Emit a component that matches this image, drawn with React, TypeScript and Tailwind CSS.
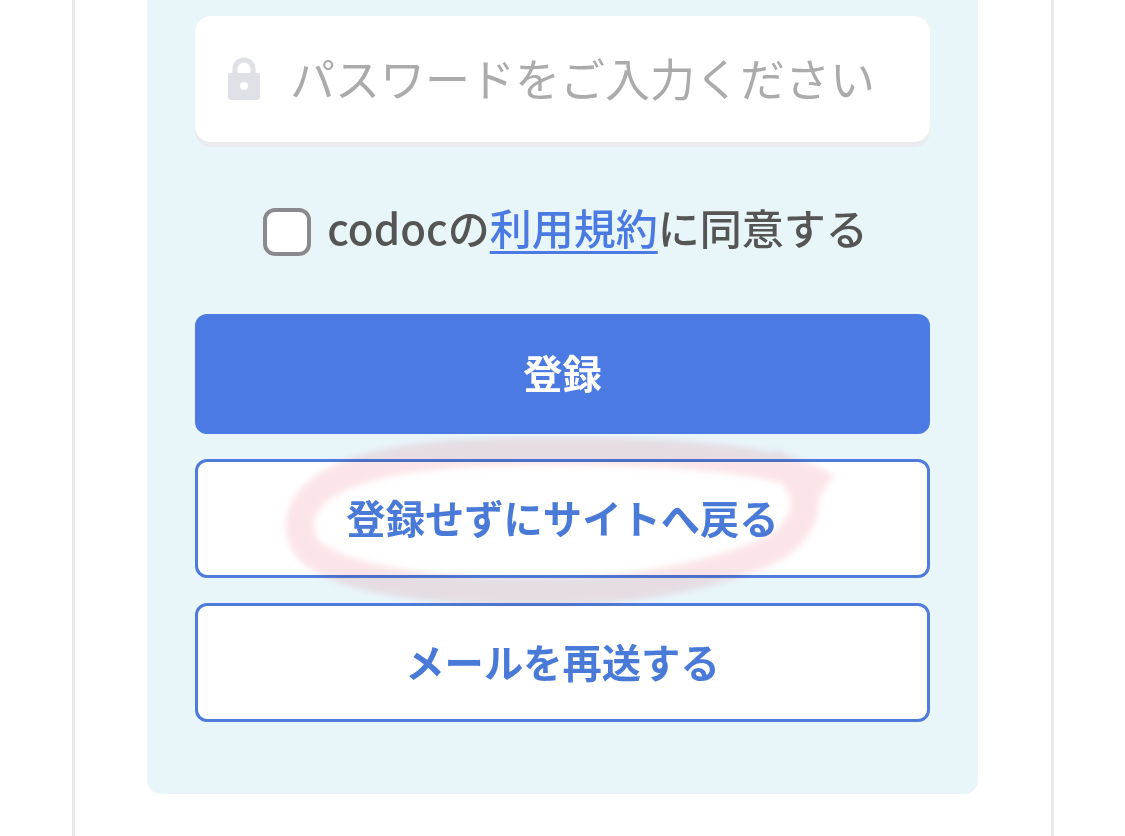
const font = "font-['Noto_Sans_CJK_JP','Noto_Sans',sans-serif]";

const LockIcon = () => (
  <svg width="34" height="44" viewBox="0 0 34 44" className="shrink-0">
    <path d="M8 18v-6a9 9 0 0 1 18 0v6" fill="none" stroke="#dfe1e6" strokeWidth="5" />
    <rect x="1" y="16" width="32" height="27" rx="3" fill="#dfe1e6" />
    <circle cx="17" cy="29" r="4" fill="#fff" />
  </svg>
);

// red marker scribble that was drawn over the screenshot
const Scribble = () => (
  <svg width="1125" height="836" viewBox="0 0 1125 836" className="absolute inset-0 pointer-events-none mix-blend-multiply">
    <defs>
      <filter id="soft" x="-10%" y="-10%" width="120%" height="120%">
        <feGaussianBlur stdDeviation="3" />
      </filter>
    </defs>
    <path
      d="M826 487C790 462 700 452 570 451C470 450 380 456 335 480C300 498 294 525 305 545C322 572 400 590 520 592C620 594 700 578 760 555C800 538 812 510 800 485C795 475 785 468 770 462"
      fill="none"
      stroke="#f08a94"
      strokeOpacity="0.22"
      strokeWidth="28"
      strokeLinecap="butt"
      strokeLinejoin="round"
      filter="url(#soft)"
    />
  </svg>
);

export default function App() {
  return (
    <div className={`relative w-[1125px] h-[836px] overflow-hidden bg-white ${font}`}>
      <div className="ml-[72px] w-[982px] h-[836px] border-x-[3px] border-[#e9e9eb] pl-[72px]">
        <div className="w-[831px] h-[794px] bg-[#e8f6fa] rounded-b-[14px] px-[48px] pt-[16px] flex flex-col">
          <div className="h-[126px] bg-white rounded-[16px] shadow-[0_5px_0_#e9ebee] flex items-center pl-[32px] gap-[29px]">
            <LockIcon />
            <span className="text-[45px] text-[#ababab] whitespace-nowrap leading-none pb-[4px]">パスワードをご入力ください</span>
          </div>

          <div className="mt-[66px] h-[48px] pl-[6px] flex items-center justify-center gap-[16px]">
            <span className="w-[48px] h-[48px] bg-white border-[4px] border-[#8a8a8e] rounded-[12px] shrink-0" />
            <span className="text-[42px] font-medium text-[#555555] whitespace-nowrap leading-none pb-[11px]">
              codocの<span className="text-[#4a7ae2] underline underline-offset-[6px] decoration-[3px]">利用規約</span>に同意する
            </span>
          </div>

          <button className="mt-[58px] h-[120px] pb-[3px] bg-[#4a7ae2] rounded-[12px] text-white text-[39.3px] font-bold">登録</button>
          <button className="mt-[25px] h-[119px] pb-[3px] bg-white border-[3px] border-[#4f7cda] rounded-[12px] text-[#4a7ad8] text-[39.3px] font-bold">登録せずにサイトへ戻る</button>
          <button className="mt-[25px] h-[119px] pb-[3px] bg-white border-[3px] border-[#4f7cda] rounded-[12px] text-[#4a7ad8] text-[39.3px] font-bold">メールを再送する</button>
        </div>
      </div>
      <Scribble />
    </div>
  );
}
